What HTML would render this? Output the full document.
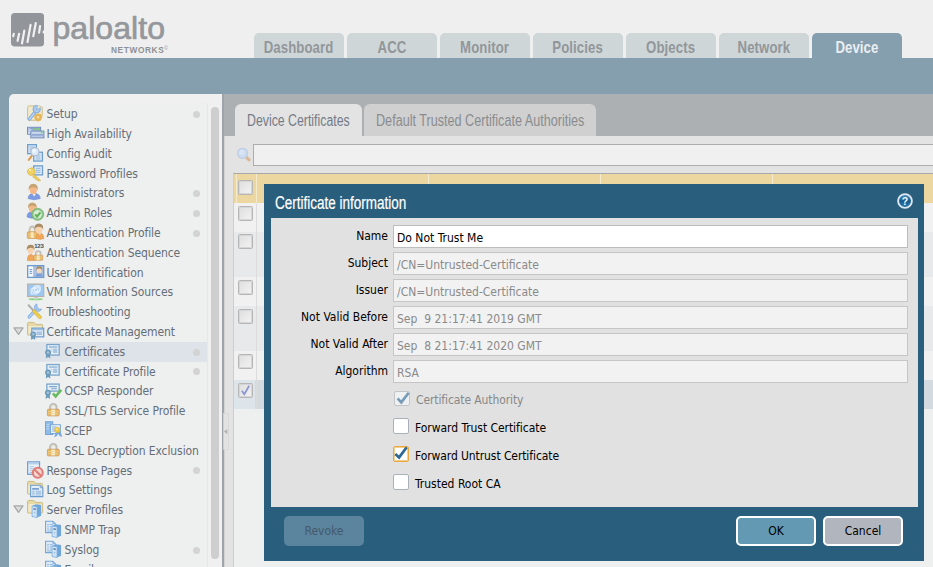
<!DOCTYPE html>
<html><head><meta charset="utf-8"><title>Certificate information</title>
<style>
html,body{margin:0;padding:0}
body{width:933px;height:567px;overflow:hidden;position:relative;background:#efefef;font-family:"DejaVu Sans Condensed","DejaVu Sans","Liberation Sans",sans-serif;font-stretch:condensed;font-size:12px;color:#000}
.abs{position:absolute}
.nar{display:inline-block;font-family:"Liberation Sans",sans-serif;font-stretch:normal;white-space:nowrap}
/* header */
#band{left:0;top:58px;width:933px;height:509px;background:#869fae}
#logo{left:11px;top:13px;width:33.2px;height:33.6px}
#pa{left:52.5px;top:8.4px;font:32px/40px "Liberation Sans",sans-serif;color:#94979b;-webkit-text-stroke:.7px #94979b;letter-spacing:.05px;white-space:nowrap}
#nw{left:111px;top:42.9px;font:bold 8.3px/10px "Liberation Sans",sans-serif;color:#8d9094;letter-spacing:.62px;white-space:nowrap}
.tt{top:33px;width:89.6px;height:25px;border-radius:5px 5px 0 0;background:#ced6d8;text-align:center;overflow:hidden}
.tt span{font:bold 16.5px/28px "Liberation Sans",sans-serif;color:#92969a;transform:scaleX(.8);transform-origin:50% 50%;display:inline-block;white-space:nowrap;letter-spacing:.1px}
.tt.on{background:#869fae}.tt.on span{color:#e9eef2}
/* sidebar */
#side{left:9px;top:94px;width:213px;height:473px;background:#f0f0f0;border-radius:5px 0 0 0;overflow:hidden}
#tree{left:0;top:9px;width:198px;height:464px;background:#eef0f0;border-right:1px solid #e6e8e8}
.r{position:absolute;left:0;width:198px;height:19.8px;line-height:19.8px;color:#656d77;letter-spacing:-.1px;white-space:nowrap}
.r.sel{background:linear-gradient(#eef0f0 .7px,#dde3e8 .7px);box-shadow:0 .8px 0 #dde3e8}
.r svg{position:absolute;top:1.1px;width:17.6px;height:17.6px;overflow:visible}
.r i{position:absolute;left:184px;top:7.5px;width:7px;height:7px;border-radius:50%;background:#d3d3d3}
.l0 svg{left:18px}.l0 b{position:absolute;left:37.5px;top:1.9px;font-weight:normal}
.l1 svg{left:36px}.l1 b{position:absolute;left:55.5px;top:1.9px;font-weight:normal}
.r u{position:absolute;left:4.3px;top:6.1px;width:11px;height:8px}
#sb{left:202px;top:13px;width:8px;height:452px;border-radius:4px;background:#cecece}
/* main */
#div{left:222px;top:94px;width:2px;height:473px;background:#9fa4aa}
#main{left:224px;top:94px;width:709px;height:473px;background:#e3e3e3}
#gband{left:0;top:0;width:709px;height:42px;background:#adb0b3}
.st{top:10px;height:32px;border-radius:6px 6px 0 0;overflow:hidden}
.st span{font:16px/33.5px "Liberation Sans",sans-serif;transform:scaleX(.77);transform-origin:0 50%;display:inline-block;white-space:nowrap;position:absolute;top:0}

.cb{position:absolute;left:4px;margin-top:-1px;width:13px;height:13px;border:1px solid #b6b6b6;border-radius:1.5px;background:linear-gradient(135deg,#dedede,#f3f3f3);box-shadow:inset 0 0 0 1px #d6d6d6}
.fl{position:absolute;left:0;width:117px;height:23px;line-height:23px;text-align:right;color:#000;white-space:nowrap}
.fi{position:absolute;left:122px;width:510px;height:21px;line-height:25.5px;border:1px solid #c6c6c6;background:#f2f2f2;color:#8a8a8a;padding-left:3px;white-space:pre}
.fi.w{background:#fff;color:#000;border-color:#bdbdbd}
.ck{position:absolute;left:121.500px;width:14px;height:14px;border:1px solid #aab1b8;border-radius:2px;background:#fff}
.ck svg{position:absolute;left:-.5px;top:-2.5px;width:16px;height:16px}
.ck.dis{left:123px;width:13.5px;height:13px;background:#eef0f1;border-color:#c2c6c9}
.ck.foc{border-color:#e9a93f;box-shadow:inset 0 0 0 1px #f3cf8e}
.cl{position:absolute;left:144px;height:20px;line-height:23.4px;white-space:nowrap}
.btn{position:absolute;border:2px solid #fff;border-radius:5px;text-align:center;line-height:26px;color:#000;white-space:nowrap}
</style></head><body>
<div id="band" class="abs"></div>
<div id="hd" class="abs" style="left:0;top:0;width:933px;height:58px;background:#efefef"></div>
<svg id="logo" class="abs" viewBox="0 0 33.2 33.6"><rect width="33.2" height="33.6" rx="3.800" fill="#92969a"/><g stroke="#f1f1f1" stroke-width="2.200" stroke-linecap="round"><path d="M2.800 20.800L2.200 23.200"/><path d="M8.100 20.800L6.600 27.800"/><path d="M13.300 17.700L11 30.500"/><path d="M19.600 11.900L16.500 29"/><path d="M24.800 10L22.300 23.100"/><path d="M29.100 13.100L28.100 19.600"/><path d="M32.900 18.400L32.700 19.400"/></g></svg>
<div id="pa" class="abs">paloalto</div>
<div id="nw" class="abs">NETWORKS<span style="font-size:5px;vertical-align:3px;font-weight:normal">©</span></div>
<div class="abs tt" style="left:254px"><span>Dashboard</span></div>
<div class="abs tt" style="left:347px"><span>ACC</span></div>
<div class="abs tt" style="left:440px"><span>Monitor</span></div>
<div class="abs tt" style="left:533px"><span>Policies</span></div>
<div class="abs tt" style="left:626px"><span>Objects</span></div>
<div class="abs tt" style="left:719px"><span>Network</span></div>
<div class="abs tt on" style="left:812px"><span>Device</span></div>

<div id="side" class="abs">
<div id="tree" class="abs">
<div class="r l0" style="top:0.40px"><svg viewBox="0 0 16 16" ><g transform="translate(0,.8)"><path d="M.5 2.400q0-1.500 1.500-1.500h8.800l3.100 1.300v7.300l-2.600 4.500h-9.400q-1.400 0-1.400-1.400z" fill="#f1e9cb" stroke="#cdb97e" stroke-width=".8"/><circle cx="10.100" cy="11.300" r="3.300" fill="#e5b65a"/><path d="M10.100 7.500v7.600M6.300 11.300h7.600M7.400 8.600l5.400 5.400M12.800 8.600l-5.400 5.400" stroke="#e5b65a" stroke-width="1.300"/><circle cx="10.100" cy="11.300" r="1.200" fill="#f3dca6"/><path d="M2.300 12.900L7.600 6" stroke="#7fa9dc" stroke-width="3.100" stroke-linecap="round"/><path d="M2.300 12.900L7.600 6" stroke="#b7d2f1" stroke-width="1.500" stroke-linecap="round"/><circle cx="8.800" cy="3.900" r="3.400" fill="#a9c9ef" stroke="#7fa9dc" stroke-width=".8"/><path d="M8.600 4.300L9.700-.2L13.200 2.600z" fill="#f1e9cb"/><path d="M8.600 4.300L9.800.3M8.600 4.300L12.600 2.500" stroke="#7fa9dc" stroke-width=".6"/></g></svg><b>Setup</b><i></i></div>
<div class="r l0" style="top:20.20px"><svg viewBox="0 0 16 16" ><rect x=".5" y="3" width="11.900" height="6.300" fill="#c3d1e9" stroke="#6f88ba" stroke-width=".9"/><path d="M1 3.500h10.900v1.700h-10.900z" fill="#8ea5d2"/><path d="M1.200 3.800l3.600 2.600-3.600 2.400" fill="none" stroke="#e6edf8" stroke-width=".8"/><path d="M4.800 6.400h7.200" stroke="#8098c8" stroke-width=".9"/><rect x="3.500" y="6.400" width="11.900" height="6.200" fill="#cbd8ec" stroke="#6f88ba" stroke-width=".9"/><path d="M4.500 9.500h10M4 10.700h11" stroke="#8da4d0" stroke-width=".9"/><rect x="6.500" y="3.700" width="2" height="1.900" rx=".5" fill="#7fcf72"/><rect x="9.200" y="3.700" width="2.100" height="1.900" rx=".5" fill="#7fcf72"/><rect x="12.600" y="6.600" width="1.700" height="1.900" rx=".5" fill="#7fcf72"/></svg><b>High Availability</b></div>
<div class="r l0" style="top:40.00px"><svg viewBox="0 0 16 16" ><rect x=".6" y=".6" width="7.900" height="8.200" fill="#dfeaf6" stroke="#6fa0cf" stroke-width="1.200"/><path d="M2.200 2.700h4.600M2.200 4.500h4.600M2.200 6.300h3" stroke="#8fb5dc" stroke-width=".9"/><rect x="6.100" y="7.500" width="7.900" height="8" fill="#dfeaf6" stroke="#6fa0cf" stroke-width="1.200"/><path d="M8 10h4.200M8 11.800h4.200M8 13.600h4.200" stroke="#8fb5dc" stroke-width=".9"/><path d="M4.400 10.800L1.600 14.500" stroke="#dc9e55" stroke-width="1.900" stroke-linecap="round"/><circle cx="7.200" cy="7" r="3.700" fill="#dcebf8" stroke="#aebad0" stroke-width="1"/><circle cx="6.400" cy="6.200" r="1.800" fill="#eef6fc"/></svg><b>Config Audit</b></div>
<div class="r l0" style="top:59.80px"><svg viewBox="0 0 16 16" ><rect x="6.100" y="1.700" width="8" height="8.200" fill="#dfeaf6" stroke="#6fa0cf" stroke-width="1.200"/><path d="M8 3.900h4.300M8 5.700h4.300M8 7.500h4.300" stroke="#8fb5dc" stroke-width=".9"/><path d="M5.500 8.600l7 6.400-2.400.5-1.100-1.500-1.200.2-.4-1.500-2-.5z" fill="#ecce5c" stroke="#d4b140" stroke-width=".5"/><ellipse cx="3.900" cy="6.900" rx="3.500" ry="3.300" transform="rotate(-30 3.900 6.900)" fill="#efd262" stroke="#d6b444" stroke-width=".6"/><circle cx="2.700" cy="5.400" r=".9" fill="#fbf3d0"/></svg><b>Password Profiles</b></div>
<div class="r l0" style="top:79.60px"><svg viewBox="0 0 16 16" ><path d="M1 13.300q0-4.700 5.500-4.700t5.500 4.700q-5.500 2-11 0z" fill="#7d9be3" stroke="#6683cf" stroke-width=".5"/><path d="M4.900 9l1.600 2.400L8.100 9z" fill="#eef2fb"/><ellipse cx="5.7" cy="5.43" rx="3.26" ry="3.89" fill="#f2b888"/><path d="M1.61 6.06q-0.63 -6.20 4.09 -6.20t4.09 6.20q-0.63 -3.15 -4.09 -3.15t-4.09 3.15z" fill="#c6a472"/></svg><b>Administrators</b><i></i></div>
<div class="r l0" style="top:99.40px"><svg viewBox="0 0 16 16" ><path d="M0 12.700q0-4.700 4.800-4.700 2 0 3.200 1.200v4.300q-4 1-8-.8z" fill="#7d9be3" stroke="#6683cf" stroke-width=".5"/><ellipse cx="4.9" cy="4.91" rx="3.16" ry="3.77" fill="#f2b888"/><path d="M0.92 5.52q-0.61 -6.02 3.98 -6.02t3.98 6.02q-0.61 -3.06 -3.98 -3.06t-3.98 3.06z" fill="#c6a472"/><circle cx="9.700" cy="10.300" r="5.500" fill="#86c283" stroke="#6fae6d" stroke-width=".6"/><circle cx="9.700" cy="10.300" r="3.900" fill="#d8eed6" stroke="#a9d6a6" stroke-width=".6"/><path d="M7.400 10.300l1.800 2 3-3.700" fill="none" stroke="#62b25c" stroke-width="1.900"/></svg><b>Admin Roles</b><i></i></div>
<div class="r l0" style="top:119.20px"><svg viewBox="0 0 16 16" ><g transform="translate(-1.5,0.5) scale(.83,1)"><path d="M4.700 8V5.600a2.850 2.850 0 0 1 5.700 0V8" fill="none" stroke="#bcbcbc" stroke-width="2"/><path d="M5.500 8V5.700a2.050 2.050 0 0 1 4.100 0V8" fill="none" stroke="#ecd9a6" stroke-width=".7"/><rect x="2.200" y="7.500" width="10.700" height="6" rx=".9" fill="#e7b862" stroke="#cb965a" stroke-width=".7"/><rect x="5.800" y="7.900" width="3.400" height="5.200" fill="#f8ebc6"/><path d="M2.600 9.500h9.900M2.600 11.500h9.900" stroke="#f2d69c" stroke-width=".7" opacity=".8"/></g><path d="M8.300 14.200q0-5 3.400-5t3.600 5q-3.500 1.400-7 0z" fill="#f0a658" stroke="#dc8f40" stroke-width=".5"/><path d="M10.600 9.400l1.100 1.700 1.100-1.700z" fill="#fbe6d0"/><ellipse cx="10.8" cy="5.80" rx="3.10" ry="3.70" fill="#f6d2ae"/><path d="M6.90 6.40q-0.60 -5.90 3.90 -5.90t3.90 5.90q-0.60 -3.00 -3.90 -3.00t-3.90 3.00z" fill="#a98b66"/></svg><b>Authentication Profile</b><i></i></div>
<div class="r l0" style="top:139.00px"><svg viewBox="0 0 16 16" ><path d="M.3 16q0-5.600 3.200-5.600t3.300 5.600z" fill="#f0a658" stroke="#dc8f40" stroke-width=".5"/><ellipse cx="3.4" cy="6.45" rx="2.85" ry="3.40" fill="#f6d2ae"/><path d="M-0.19 7.00q-0.55 -5.43 3.59 -5.43t3.59 5.43q-0.55 -2.76 -3.59 -2.76t-3.59 2.76z" fill="#a98b66"/><g transform="translate(4.3,5.2) scale(0.78)"><path d="M4.700 8V5.600a2.850 2.850 0 0 1 5.700 0V8" fill="none" stroke="#bcbcbc" stroke-width="2"/><path d="M5.500 8V5.700a2.050 2.050 0 0 1 4.100 0V8" fill="none" stroke="#ecd9a6" stroke-width=".7"/><rect x="2.200" y="7.500" width="10.700" height="6" rx=".9" fill="#e7b862" stroke="#cb965a" stroke-width=".7"/><rect x="5.800" y="7.900" width="3.400" height="5.200" fill="#f8ebc6"/><path d="M2.600 9.500h9.900M2.600 11.500h9.900" stroke="#f2d69c" stroke-width=".7" opacity=".8"/></g><rect x="6.200" y=".2" width="9.300" height="4.600" fill="#e9e9e9"/><text x="6.500" y="4.500" font-family="Liberation Sans,sans-serif" font-weight="bold" font-size="5.400" fill="#4e4e4e" textLength="8.800" lengthAdjust="spacingAndGlyphs">123</text></svg><b>Authentication Sequence</b></div>
<div class="r l0" style="top:158.80px"><svg viewBox="0 0 16 16" ><rect x=".6" y="2.400" width="14.600" height="10.700" fill="#a9c1de" stroke="#6c9bcd" stroke-width="1.200"/><rect x="1.300" y="3.100" width="4.300" height="9.300" fill="#f4f8fc"/><path d="M2.300 6h2.400M2.300 7.800h2.400M2.300 9.600h2.400" stroke="#7ea8d6" stroke-width="1"/><path d="M8 12.300q0-2.900 3.100-2.900t3.100 2.900z" fill="#7f9fd6"/><ellipse cx="11.1" cy="6.73" rx="2.23" ry="2.66" fill="#f6d9bc"/><path d="M8.29 7.16q-0.43 -4.25 2.81 -4.25t2.81 4.25q-0.43 -2.16 -2.81 -2.16t-2.81 2.16z" fill="#a88a64"/></svg><b>User Identification</b></div>
<div class="r l0" style="top:178.60px"><svg viewBox="0 0 16 16" ><rect x=".6" y="1" width="14.600" height="11.300" fill="#9cc7f1" stroke="#b9b2a9" stroke-width="1.100"/><rect x="3.700" y="5" width="5.800" height="5" rx="1.200" fill="none" stroke="#e3effb" stroke-width="1.100"/><rect x="5.300" y="3.800" width="5.800" height="5" rx="1.200" fill="none" stroke="#e3effb" stroke-width="1.100"/><rect x="6.900" y="2.700" width="5" height="5" rx="1.200" fill="none" stroke="#e3effb" stroke-width="1.100"/><path d="M6.700 12.700h3.200v1.600h-3.200z" fill="#c6c6c6"/><ellipse cx="7.900" cy="14.700" rx="6.600" ry="1" fill="#86d27c"/><path d="M5.800 14.300h4.600" stroke="#dadada" stroke-width="1.100"/></svg><b>VM Information Sources</b></div>
<div class="r l0" style="top:198.40px"><svg viewBox="0 0 16 16" ><path d="M1.500 3L6.300 8.100" stroke="#a9a9a9" stroke-width="1.800" stroke-linecap="round"/><path d="M2.200 2.900L6.400 7.400" stroke="#e6e6e6" stroke-width=".5" stroke-dasharray=".6 .6"/><path d="M2 13.600L6.800 8.400" stroke="#84b0e4" stroke-width="3" stroke-linecap="round"/><path d="M2 13.600L6.800 8.400" stroke="#b9d4f2" stroke-width="1.300" stroke-linecap="round"/><path d="M9 1.700a3.500 3.500 0 1 0 4.400 4.700l-2.300.3-2-2.300z" fill="#a3c6ee" stroke="#84b0e4" stroke-width=".8"/><path d="M6.400 8.400L11.800 13.900" stroke="#cfae4a" stroke-width="3.300" stroke-linecap="round"/><path d="M6.400 8.400L11.800 13.900" stroke="#ecd04e" stroke-width="2.300" stroke-linecap="round"/></svg><b>Troubleshooting</b></div>
<div class="r l0" style="top:218.20px"><u><svg viewBox="0 0 11 8" style="position:absolute;left:0;top:0;width:11px;height:8px;overflow:visible"><path d="M1 .9h9L5.500 7.300z" fill="#dcdcdc" stroke="#a8a8a8" stroke-width="1.300" stroke-linejoin="round"/></svg></u><svg viewBox="0 0 16 16" ><path d="M.5 1.200q0-.8.800-.8h4.700q.6 0 1 .5l1.100 1.300h5.300q.8 0 .8.800v8.300q0 .6-.6.600h-12.500q-.6 0-.6-.6z" fill="#e7d9a6" stroke="#cab679" stroke-width=".8"/><path d="M1.300 3.600h12.200v7.600h-12.200z" fill="#f1e9c9"/><rect x="4.400" y="5.600" width="10.800" height="7.900" fill="#e2ecf6" stroke="#6c9ccd" stroke-width="1.100"/><path d="M5 6.300h9.600v1.300h-9.600z" fill="#9fc0e2"/><path d="M8.600 9.300h5M8.600 11h5" stroke="#86aeda" stroke-width="1"/><path d="M4 12.500l-.5 3.500h1l1.100-.9 1.200.9h.8l-.5-3.500z" fill="#6e9bbb"/><circle cx="5.600" cy="11.200" r="2.600" fill="#6e9bbb"/><circle cx="5.600" cy="11.200" r="1.100" fill="#a4c4d9"/></svg><b>Certificate Management</b></div>
<div class="r l1 sel" style="top:238.00px"><svg viewBox="0 0 16 16" ><rect x="1.700" y="2.300" width="11.200" height="9.600" fill="#e6eef6" stroke="#7ba6cd" stroke-width="1.200"/><path d="M3.600 4.600h7.600" stroke="#7ba6cd" stroke-width="1"/><rect x="7.400" y="6" width="3.800" height="4" fill="#a9c6e0"/><path d="M5 6.600h1.800M5 8.400h1.800" stroke="#b9d0e6" stroke-width=".9"/><path d="M1.200 11l-.5 4 2.100-1.300L4.900 15l-.5-4z" fill="#6e9bbb"/><circle cx="2.800" cy="9.500" r="2.700" fill="#6e9bbb"/><circle cx="2.800" cy="9.500" r="1.200" fill="#a4c4d9"/></svg><b>Certificates</b><i></i></div>
<div class="r l1" style="top:257.80px"><svg viewBox="0 0 16 16" ><rect x="1.700" y="2.300" width="11.200" height="9.600" fill="#e6eef6" stroke="#7ba6cd" stroke-width="1.200"/><path d="M3.600 4.600h7.600" stroke="#7ba6cd" stroke-width="1"/><rect x="7.400" y="6" width="3.800" height="4" fill="#a9c6e0"/><path d="M5 6.600h1.800M5 8.400h1.800" stroke="#b9d0e6" stroke-width=".9"/><path d="M1.200 11l-.5 4 2.100-1.300L4.900 15l-.5-4z" fill="#6e9bbb"/><circle cx="2.800" cy="9.500" r="2.700" fill="#6e9bbb"/><circle cx="2.800" cy="9.500" r="1.200" fill="#a4c4d9"/></svg><b>Certificate Profile</b><i></i></div>
<div class="r l1" style="top:277.60px"><svg viewBox="0 0 16 16" ><rect x="1.700" y="1.900" width="11.200" height="6.400" fill="#e6eef6" stroke="#7ba6cd" stroke-width="1.200"/><path d="M3.800 4.200h7M5.600 6.200h5.200" stroke="#7ba6cd" stroke-width="1"/><path d="M1 11.500l-.5 4 2.100-1.300L4.700 15.500l-.5-4z" fill="#6e9bbb"/><circle cx="2.600" cy="9.800" r="2.700" fill="#6e9bbb"/><circle cx="2.600" cy="9.800" r="1.200" fill="#a4c4d9"/><path d="M7.200 10.400l2.500 2.800 5-6" fill="none" stroke="#6cba62" stroke-width="2.500"/></svg><b>OCSP Responder</b></div>
<div class="r l1" style="top:297.40px"><svg viewBox="0 0 16 16" ><g transform="translate(0,0) scale(1)"><path d="M4.700 8V5.600a2.850 2.850 0 0 1 5.700 0V8" fill="none" stroke="#bcbcbc" stroke-width="2"/><path d="M5.500 8V5.700a2.050 2.050 0 0 1 4.100 0V8" fill="none" stroke="#ecd9a6" stroke-width=".7"/><rect x="2.200" y="7.500" width="10.700" height="6" rx=".9" fill="#e7b862" stroke="#cb965a" stroke-width=".7"/><rect x="5.800" y="7.900" width="3.400" height="5.200" fill="#f8ebc6"/><path d="M2.600 9.500h9.900M2.600 11.500h9.900" stroke="#f2d69c" stroke-width=".7" opacity=".8"/></g></svg><b>SSL/TLS Service Profile</b></div>
<div class="r l1" style="top:317.20px"><svg viewBox="0 0 16 16" ><rect x=".4" y=".7" width="6.700" height="11.600" fill="#8fbbe8" stroke="#6c9fd6" stroke-width=".8"/><path d="M1.500 3h2.500M1.500 5h2M1.500 7h2" stroke="#c7ddf4" stroke-width=".8"/><rect x="5" y="3.400" width="9" height="8" fill="#e9f1f9" stroke="#79a8d6" stroke-width=".9"/><path d="M6.300 5.500h4M6.300 7.300h2.800M6.300 9.100h2.800" stroke="#88b0dc" stroke-width=".9"/><path d="M10 9.500l-1.600 5.300 2.400-1.200 1.100-2.100 1.600 2.300 2.300.6-2-5z" fill="#79aadf"/><circle cx="11.200" cy="8.100" r="2.400" fill="#f1c944" stroke="#e0b030" stroke-width=".5"/><circle cx="10.700" cy="7.500" r="1" fill="#f9e390"/></svg><b>SCEP</b></div>
<div class="r l1" style="top:337.00px"><svg viewBox="0 0 16 16" ><g transform="translate(0,0) scale(1)"><path d="M4.700 8V5.600a2.850 2.850 0 0 1 5.700 0V8" fill="none" stroke="#bcbcbc" stroke-width="2"/><path d="M5.500 8V5.700a2.050 2.050 0 0 1 4.100 0V8" fill="none" stroke="#ecd9a6" stroke-width=".7"/><rect x="2.200" y="7.500" width="10.700" height="6" rx=".9" fill="#e7b862" stroke="#cb965a" stroke-width=".7"/><rect x="5.800" y="7.900" width="3.400" height="5.200" fill="#f8ebc6"/><path d="M2.600 9.500h9.900M2.600 11.500h9.900" stroke="#f2d69c" stroke-width=".7" opacity=".8"/></g></svg><b>SSL Decryption Exclusion</b></div>
<div class="r l0" style="top:356.80px"><svg viewBox="0 0 16 16" ><rect x=".6" y=".8" width="10.800" height="11.300" fill="#e9f1f9" stroke="#6c9ccd" stroke-width="1.100"/><path d="M1.200 1.400h9.600v1.700h-9.600z" fill="#b3cfec"/><path d="M2.400 5.200h4M2.400 7h3M2.400 8.800h2.400M2.400 10.500h2.400" stroke="#a9c6e4" stroke-width=".9"/><circle cx="9.800" cy="10.700" r="4.500" fill="#f3d6cf" stroke="#df7c78" stroke-width="1.900"/><path d="M6.700 7.700l6.200 6" stroke="#df7c78" stroke-width="1.900"/></svg><b>Response Pages</b><i></i></div>
<div class="r l0" style="top:376.60px"><svg viewBox="0 0 16 16" ><path d="M.5 1.200q0-.8.800-.8h4.700q.6 0 1 .5l1.100 1.300h5.300q.8 0 .8.800v8.300q0 .6-.6.600h-12.500q-.6 0-.6-.6z" fill="#e7d9a6" stroke="#cab679" stroke-width=".8"/><path d="M1.300 3.600h12.200v7.600h-12.200z" fill="#f1e9c9"/><path d="M3.300 3.800h8.700l2.400 2.400v8h-11.100z" fill="#e4eef8" stroke="#6c9ccd" stroke-width="1"/><path d="M12 3.800v2.400h2.400z" fill="#b9d3ee" stroke="#6c9ccd" stroke-width=".6"/><path d="M4.700 7.200h6.200" stroke="#5e8fc8" stroke-width="1.300"/><path d="M4.700 9.300h2.200M7.800 9.300h5.200M4.700 11h2.200M7.800 11h5.200M4.700 12.700h2.200M7.800 12.700h5.200" stroke="#8fb5dc" stroke-width="1"/></svg><b>Log Settings</b></div>
<div class="r l0" style="top:396.40px"><u><svg viewBox="0 0 11 8" style="position:absolute;left:0;top:0;width:11px;height:8px;overflow:visible"><path d="M1 .9h9L5.500 7.300z" fill="#dcdcdc" stroke="#a8a8a8" stroke-width="1.300" stroke-linejoin="round"/></svg></u><svg viewBox="0 0 16 16" ><path d="M.5 1.200q0-.8.800-.8h4.700q.6 0 1 .5l1.100 1.300h5.300q.8 0 .8.800v8.300q0 .6-.6.600h-12.500q-.6 0-.6-.6z" fill="#e7d9a6" stroke="#cab679" stroke-width=".8"/><path d="M1.300 3.600h12.200v7.600h-12.200z" fill="#f1e9c9"/><g transform="translate(-1.8,0)"><path d="M6.400 5.400l3.600-1.600 4.600.7v9.800l-3.600 1.600-4.600-.8z" fill="#6ea6dc"/><path d="M6.400 5.400l4.600.800v9.700l-4.600-.8z" fill="#cfe3f5" stroke="#6ea6dc" stroke-width=".6"/><path d="M7.600 8l2.200.4" stroke="#56749c" stroke-width="1.200"/><path d="M8.300 11.500l1 .2" stroke="#8aa6c6" stroke-width=".9"/></g></svg><b>Server Profiles</b></div>
<div class="r l1" style="top:416.20px"><svg viewBox="0 0 16 16" ><path d="M.5 1.100h6.600l2.200 2.200v8.200h-8.800z" fill="#deeaf6" stroke="#77a7d8" stroke-width="1"/><path d="M7.100 1.100v2.200h2.200z" fill="#b9d3ee" stroke="#77a7d8" stroke-width=".6"/><path d="M2 4.200h1.500M4.300 4.200h2.700M2 6.200h1.500M4.300 6.200h2M2 8.200h1.500M4.300 8.200h2M2 10h4" stroke="#8fb5dc" stroke-width=".9"/><g transform="translate(0,0)"><path d="M6.400 5.400l3.600-1.600 4.600.7v9.800l-3.600 1.600-4.600-.8z" fill="#6ea6dc"/><path d="M6.400 5.400l4.600.800v9.700l-4.600-.8z" fill="#cfe3f5" stroke="#6ea6dc" stroke-width=".6"/><path d="M7.600 8l2.200.4" stroke="#56749c" stroke-width="1.200"/><path d="M8.300 11.500l1 .2" stroke="#8aa6c6" stroke-width=".9"/></g></svg><b>SNMP Trap</b></div>
<div class="r l1" style="top:436.00px"><svg viewBox="0 0 16 16" ><path d="M.5 1.100h6.600l2.200 2.200v8.200h-8.800z" fill="#deeaf6" stroke="#77a7d8" stroke-width="1"/><path d="M7.100 1.100v2.200h2.200z" fill="#b9d3ee" stroke="#77a7d8" stroke-width=".6"/><path d="M2 4.200h1.500M4.300 4.200h2.700M2 6.200h1.500M4.300 6.200h2M2 8.200h1.500M4.300 8.200h2M2 10h4" stroke="#8fb5dc" stroke-width=".9"/><g transform="translate(0,0)"><path d="M6.400 5.400l3.600-1.600 4.600.7v9.800l-3.600 1.600-4.600-.8z" fill="#6ea6dc"/><path d="M6.400 5.400l4.600.800v9.700l-4.600-.8z" fill="#cfe3f5" stroke="#6ea6dc" stroke-width=".6"/><path d="M7.600 8l2.200.4" stroke="#56749c" stroke-width="1.200"/><path d="M8.300 11.500l1 .2" stroke="#8aa6c6" stroke-width=".9"/></g></svg><b>Syslog</b><i></i></div>
<div class="r l1" style="top:455.80px"><svg viewBox="0 0 16 16" ><path d="M.5 1.100h6.600l2.200 2.200v8.200h-8.800z" fill="#deeaf6" stroke="#77a7d8" stroke-width="1"/><path d="M7.100 1.100v2.200h2.200z" fill="#b9d3ee" stroke="#77a7d8" stroke-width=".6"/><path d="M2 4.200h1.500M4.300 4.200h2.700M2 6.200h1.500M4.300 6.200h2M2 8.200h1.500M4.300 8.200h2M2 10h4" stroke="#8fb5dc" stroke-width=".9"/><g transform="translate(0,0)"><path d="M6.400 5.400l3.600-1.600 4.600.7v9.800l-3.600 1.600-4.600-.8z" fill="#6ea6dc"/><path d="M6.400 5.400l4.600.800v9.700l-4.600-.8z" fill="#cfe3f5" stroke="#6ea6dc" stroke-width=".6"/><path d="M7.600 8l2.200.4" stroke="#56749c" stroke-width="1.200"/><path d="M8.300 11.500l1 .2" stroke="#8aa6c6" stroke-width=".9"/></g></svg><b>Email</b></div>
</div>
<div id="sb" class="abs"></div>
</div>
<div id="div" class="abs"></div>
<div id="main" class="abs">
<div id="gband" class="abs"></div>
<div class="abs st" style="left:11px;width:127px;background:#e3e3e3"><span style="left:12px;color:#747b87;margin-top:.3px">Device Certificates</span></div>
<div class="abs st" style="left:140px;width:232px;background:#d0d0d0"><span style="left:12px;color:#8a8c8f;transform:scaleX(.789)">Default Trusted Certificate Authorities</span></div>
<div class="abs" style="left:0;top:42px;width:1px;height:431px;background:#d3d3d3"></div>
<svg class="abs" style="left:11px;top:52px;width:16px;height:16px" viewBox="0 0 16 16"><path d="M11.200 11.100L14 13.900" stroke="#dcb994" stroke-width="3.100" stroke-linecap="round"/><circle cx="7.600" cy="7.300" r="5" fill="#ccdcf0" stroke="#bccde4" stroke-width="1.200"/><circle cx="6.800" cy="6.500" r="2.600" fill="#d9e5f4"/></svg>
<div class="abs" style="left:29px;top:50px;width:690px;height:20px;border:1px solid #adadad;background:#f0f0f0"></div>
<div id="grid" class="abs" style="left:8.700px;top:79px;width:700px;height:400px;border-left:1px solid #cdcdcd;border-top:1px solid #a8a8a8;background:#eef0f0">
 <div class="abs" style="left:0;top:0;width:700px;height:28.500px;background:#ecd7a1"></div>
 <div class="abs" style="left:0;top:28.500px;width:700px;height:29px;background:#f1f1f1"></div>
 <div class="abs" style="left:0;top:57.500px;width:700px;height:45px;background:#e8e9eb"></div>
 <div class="abs" style="left:0;top:102.500px;width:700px;height:29px;background:#f1f1f1"></div>
 <div class="abs" style="left:0;top:131.500px;width:700px;height:45px;background:#e8e9eb"></div>
 <div class="abs" style="left:0;top:176.500px;width:700px;height:29px;background:#f1f1f1"></div>
 <div class="abs" style="left:0;top:205.500px;width:700px;height:29px;background:#d3dae0"></div>
 <div class="abs" style="left:0;top:205.500px;width:21.800px;height:29px;background:#dde4ea"></div>
 <div class="abs" style="left:2.300px;top:0;width:1px;height:28.500px;background:#f4e9c9"></div>
 <div class="abs" style="left:22.200px;top:0;width:1px;height:28.500px;background:#f4e9c9"></div>
 <div class="abs" style="left:22.200px;top:28.500px;width:1px;height:206px;background:#dcdcdc"></div>
 <div class="abs" style="left:194.100px;top:0;width:1px;height:28.500px;background:#f5ebcf"></div>
 <div class="abs" style="left:366px;top:0;width:1px;height:28.500px;background:#f5ebcf"></div>
 <div class="abs" style="left:537.900px;top:0;width:1px;height:28.500px;background:#f5ebcf"></div>
 <div class="cb" style="top:6.500px"></div>
 <div class="cb" style="top:32.500px"></div>
 <div class="cb" style="top:60.500px"></div>
 <div class="cb" style="top:106.500px"></div>
 <div class="cb" style="top:135.500px"></div>
 <div class="cb" style="top:180.500px"></div>
 <div class="cb" style="top:209.500px"><svg viewBox="0 0 13 13" style="position:absolute;left:0;top:0;width:13px;height:13px"><path d="M2.800 6.800l2.500 3.500L10.200 1.800" fill="none" stroke="#8e98cf" stroke-width="1.800"/></svg></div>
</div>
<svg class="abs" style="left:-1.500px;top:318.500px;width:9px;height:40px" viewBox="0 0 9 40"><rect x=".5" y=".3" width="4.800" height="36.200" fill="#e2e2e2" stroke="#d6d6d6" stroke-width=".6"/><path d="M4.300 16v5L.7 18.500z" fill="#b4b4b4"/></svg>

</div>
<div id="modal" class="abs" style="left:264px;top:184px;width:660px;height:377px;background:#295e7c">
 <div class="abs" style="left:10.700px;top:8.300px;height:24px"><span class="nar" style="font-size:17.500px;line-height:23px;color:#fff;-webkit-text-stroke:.2px #fff;transform:scaleX(.771);transform-origin:0 50%">Certificate information</span></div>
 <svg class="abs" style="left:633px;top:9px;width:16px;height:16px" viewBox="0 0 16 16"><defs><linearGradient id="hg" x1="0" y1="0" x2="0" y2="1"><stop offset="0" stop-color="#4a93c6"/><stop offset=".5" stop-color="#165a8e"/><stop offset="1" stop-color="#2e7db4"/></linearGradient></defs><circle cx="8" cy="8" r="6.900" fill="url(#hg)" stroke="#dbe6ee" stroke-width="1.900"/><text x="8" y="11.700" text-anchor="middle" font-family="Liberation Sans,sans-serif" font-weight="bold" font-size="10.500" fill="#f4f7fa">?</text></svg>
 <div class="abs" style="left:7px;top:34px;width:647px;height:288.500px;background:#e1e1e1">
  <div class="fl" style="top:7px">Name</div><div class="fi w" style="top:7px">Do Not Trust Me</div>
  <div class="fl" style="top:34px">Subject</div><div class="fi" style="top:34px">/CN=Untrusted-Certificate</div>
  <div class="fl" style="top:61px">Issuer</div><div class="fi" style="top:61px">/CN=Untrusted-Certificate</div>
  <div class="fl" style="top:88px">Not Valid Before</div><div class="fi" style="top:88px">Sep  9 21:17:41 2019 GMT</div>
  <div class="fl" style="top:115px">Not Valid After</div><div class="fi" style="top:115px">Sep  8 21:17:41 2020 GMT</div>
  <div class="fl" style="top:142px">Algorithm</div><div class="fi" style="top:142px">RSA</div>
  <div class="ck dis" style="top:173px"><svg viewBox="0 0 16 16"><path d="M2.600 8.400l3.700 4L13.700 2.700" fill="none" stroke="#779cba" stroke-width="2.700"/></svg></div><div class="cl" style="top:171px;left:145px;color:#888;letter-spacing:-.1px">Certificate Authority</div>
  <div class="ck" style="top:199.500px"></div><div class="cl" style="top:199px;letter-spacing:-.05px">Forward Trust Certificate</div>
  <div class="ck foc" style="top:227.500px"><svg viewBox="0 0 16 16"><path d="M2.300 9.900l3.800 3.500L13.700 3.200" fill="none" stroke="#2c6894" stroke-width="2.700"/></svg></div><div class="cl" style="top:227px;letter-spacing:-.09px">Forward Untrust Certificate</div>
  <div class="ck" style="top:255.500px"></div><div class="cl" style="top:255px">Trusted Root CA</div>
 </div>
 <div class="btn" style="left:20px;top:332px;width:80px;height:30px;background:#5b849e;color:#445a6c;border:0;line-height:30px">Revoke</div>
 <div class="btn" style="left:472px;top:332px;width:76px;height:26px;background:#6399b2">OK</div>
 <div class="btn" style="left:559px;top:332px;width:76px;height:26px;background:#b1b5bd">Cancel</div>
</div>

</body></html>
